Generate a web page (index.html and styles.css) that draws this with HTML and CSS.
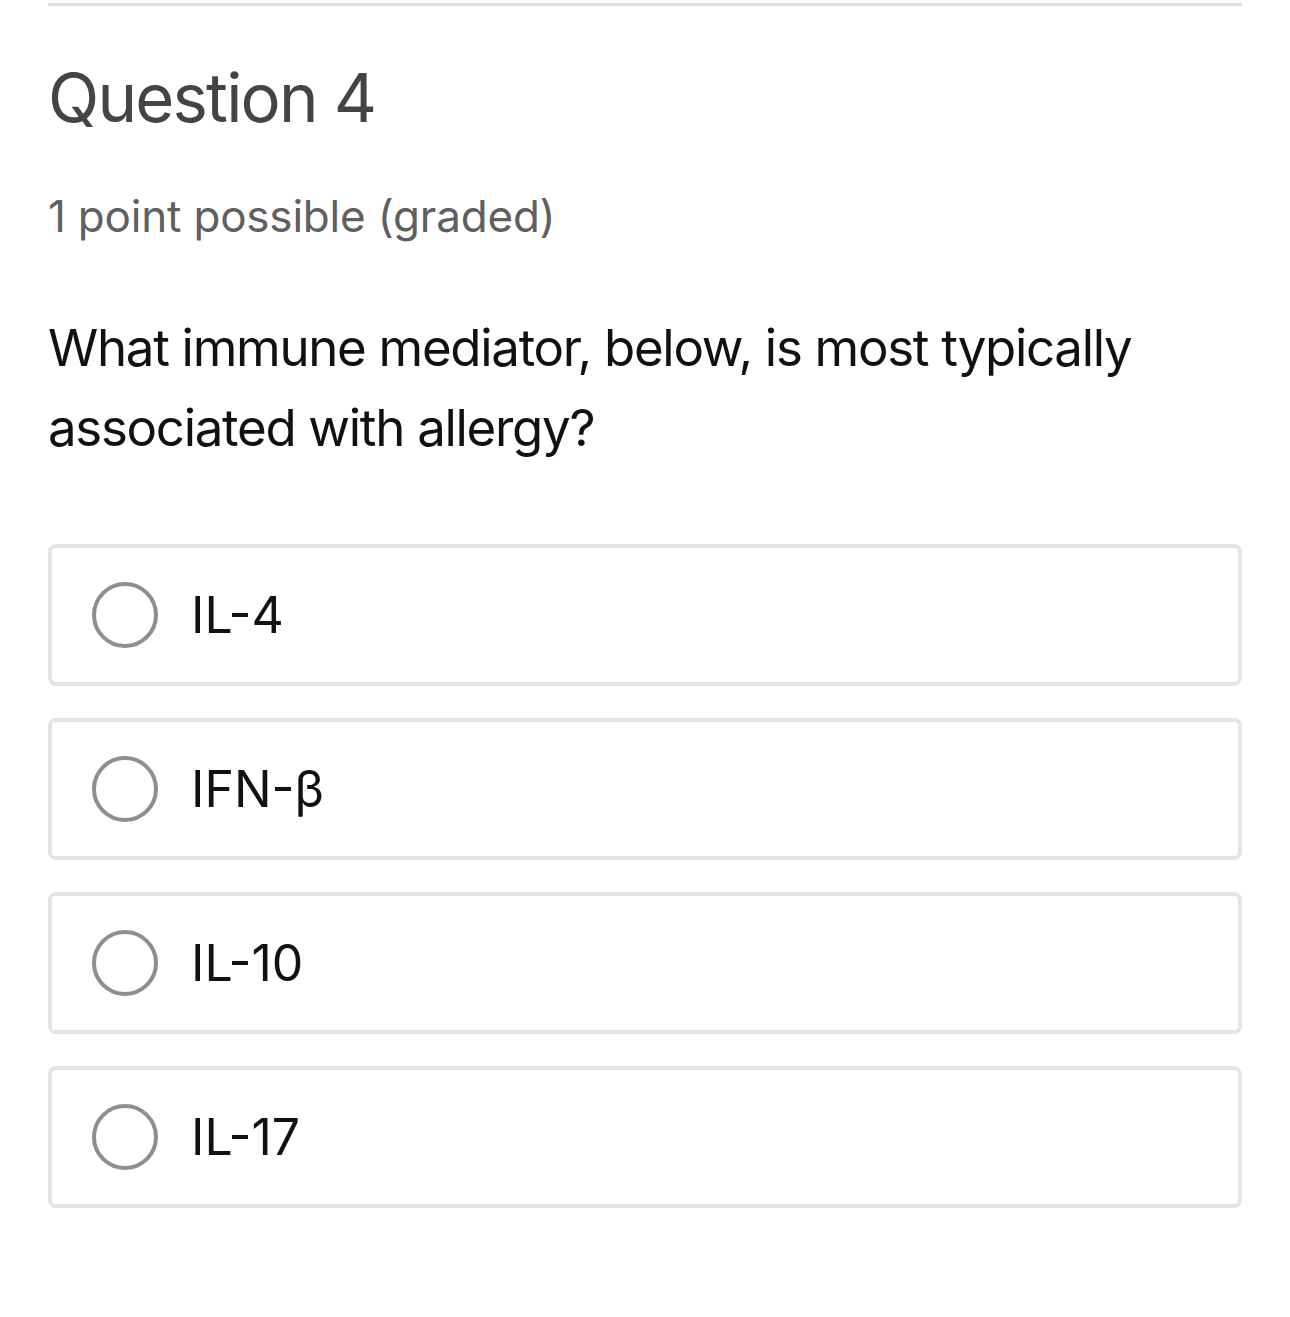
FILE: index.html
```html
<!DOCTYPE html>
<html>
<head>
<meta charset="utf-8">
<link rel="stylesheet" href="styles.css">
</head>
<body>
<div class="page">
  <div class="rule"></div>
  <h2 class="title">Question 4</h2>
  <div class="points">1 point possible (graded)</div>
  <p class="prompt">What immune mediator, below, is most typically associated with allergy?</p>
  <div class="options">
    <label class="option"><span class="radio"></span><span class="label">IL-4</span></label>
    <label class="option"><span class="radio"></span><span class="label">IFN-β</span></label>
    <label class="option"><span class="radio"></span><span class="label">IL-10</span></label>
    <label class="option"><span class="radio"></span><span class="label">IL-17</span></label>
  </div>
</div>
</body>
</html>
```
FILE: styles.css
```css
html, body {
  margin: 0;
  padding: 0;
  background: #fff;
}
body {
  font-family: Inter, "Noto Sans", sans-serif;
}
.page {
  padding: 3px 48px 0 48px;
}
.rule {
  height: 3px;
  background: #dedede;
}
.title {
  margin: 0;
  padding-top: 52px;
  font-size: 67px;
  font-weight: 400;
  line-height: 80px;
  color: #444;
  letter-spacing: -1.8px;
}
.points {
  margin-top: 50px;
  font-size: 44px;
  line-height: 56px;
  color: #5f5f5f;
  letter-spacing: -0.2px;
}
.prompt {
  margin: 64px 0 0 0;
  font-size: 51px;
  line-height: 80px;
  color: #111;
  letter-spacing: -1.3px;
}
.options {
  margin-top: 76px;
  display: flex;
  flex-direction: column;
  gap: 32px;
}
.option {
  display: flex;
  align-items: center;
  height: 142px;
  box-sizing: border-box;
  border: 4px solid #e4e4e4;
  border-radius: 8px;
  padding-left: 40px;
}
.radio {
  width: 66px;
  height: 66px;
  box-sizing: border-box;
  border: 4px solid #8e8e8e;
  border-radius: 50%;
  flex: none;
}
.label {
  margin-left: 33px;
  font-size: 50px;
  line-height: 60px;
  color: #111;
}
```
